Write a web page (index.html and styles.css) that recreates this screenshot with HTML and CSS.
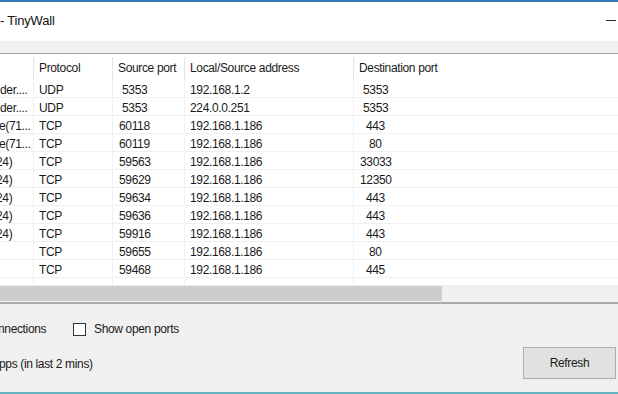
FILE: index.html
```html
<!DOCTYPE html>
<html>
<head>
<meta charset="utf-8">
<title>Connections - TinyWall</title>
<link rel="stylesheet" href="styles.css">
</head>
<body>
<div class="win">
  <div class="topline"></div>
  <div class="titlebar">
    <span class="title">- TinyWall</span>
    <span class="min"></span>
  </div>
  <div class="strip"></div>
  <div class="list">
    <div class="hdr">
      <div class="hc"></div>
      <div class="hc">Protocol</div>
      <div class="hc">Source port</div>
      <div class="hc">Local/Source address</div>
      <div class="hc last">Destination port</div>
    </div>
    <div class="row"><div class="c c1">der....</div><div class="c">UDP</div><div class="c port"> 5353</div><div class="c">192.168.1.2</div><div class="c port last"> 5353</div></div>
    <div class="row"><div class="c c1">der....</div><div class="c">UDP</div><div class="c port"> 5353</div><div class="c">224.0.0.251</div><div class="c port last"> 5353</div></div>
    <div class="row"><div class="c c1 cut1">e(71...</div><div class="c">TCP</div><div class="c port">60118</div><div class="c">192.168.1.186</div><div class="c port last">  443</div></div>
    <div class="row"><div class="c c1 cut1">e(71...</div><div class="c">TCP</div><div class="c port">60119</div><div class="c">192.168.1.186</div><div class="c port last">   80</div></div>
    <div class="row"><div class="c c1 cut4">24)</div><div class="c">TCP</div><div class="c port">59563</div><div class="c">192.168.1.186</div><div class="c port last">33033</div></div>
    <div class="row"><div class="c c1 cut4">24)</div><div class="c">TCP</div><div class="c port">59629</div><div class="c">192.168.1.186</div><div class="c port last">12350</div></div>
    <div class="row"><div class="c c1 cut4">24)</div><div class="c">TCP</div><div class="c port">59634</div><div class="c">192.168.1.186</div><div class="c port last">  443</div></div>
    <div class="row"><div class="c c1 cut4">24)</div><div class="c">TCP</div><div class="c port">59636</div><div class="c">192.168.1.186</div><div class="c port last">  443</div></div>
    <div class="row"><div class="c c1 cut4">24)</div><div class="c">TCP</div><div class="c port">59916</div><div class="c">192.168.1.186</div><div class="c port last">  443</div></div>
    <div class="row"><div class="c c1"></div><div class="c">TCP</div><div class="c port">59655</div><div class="c">192.168.1.186</div><div class="c port last">   80</div></div>
    <div class="row"><div class="c c1"></div><div class="c">TCP</div><div class="c port">59468</div><div class="c">192.168.1.186</div><div class="c port last">  445</div></div>
    <div class="row filler"><div class="c"></div><div class="c"></div><div class="c"></div><div class="c"></div><div class="c last"></div></div>
    <div class="hscroll"><div class="thumb"></div></div>
  </div>
  <div class="panel">
    <div class="opts">
      <div class="optrow">
        <span class="frag">nnections</span>
        <span class="check"></span>
        <span class="label">Show open ports</span>
      </div>
      <div class="optrow">
        <span class="frag2">pps (in last 2 mins)</span>
      </div>
    </div>
    <button class="btn">Refresh</button>
  </div>
  <div class="teal"></div>
</div>
</body>
</html>
```

FILE: styles.css
```css
html, body {
  margin: 0;
  padding: 0;
}
body {
  width: 618px;
  height: 394px;
  overflow: hidden;
  background: #f0f0f0;
  font-family: "Liberation Sans", Arial, sans-serif;
  font-size: 12px;
  letter-spacing: -0.35px;
  color: #1a1a1a;
}
.win {
  display: flex;
  flex-direction: column;
  width: 618px;
  height: 394px;
}
.topline {
  height: 2px;
  background: #3577b8;
  flex: none;
}
.titlebar {
  height: 39px;
  flex: none;
  background: #ffffff;
  display: flex;
  justify-content: space-between;
  align-items: flex-start;
}
.title {
  font-size: 13px;
  letter-spacing: -0.2px;
  line-height: 37px;
  color: #111;
}
.min {
  width: 10px;
  height: 1px;
  background: #2a2a2a;
  margin-top: 18px;
  margin-right: 2px;
}
.strip {
  height: 12px;
  flex: none;
  background: #f0f0f0;
}
.list {
  flex: none;
  background: #ffffff;
  border-top: 1px solid #a3a3a3;
  border-bottom: 2px solid #ababab;
}
.hdr, .row {
  display: grid;
  grid-template-columns: 34px 79px 72px 169px 1fr;
}
.hdr {
  height: 26px;
  align-items: end;
}
.hc {
  height: 23px;
  line-height: 23px;
  padding-left: 5px;
  border-right: 1px solid #e5e5e5;
  white-space: nowrap;
  overflow: hidden;
}
.hc.last, .c.last {
  border-right: none;
}
.row {
  height: 18px;
  grid-template-rows: 17px;
  box-sizing: border-box;
  border-bottom: 1px solid #f0f0f0;
}
.c {
  line-height: 17px;
  padding-top: 2px;
  padding-left: 5px;
  border-right: 1px solid #f0f0f0;
  white-space: pre;
  overflow: hidden;
}
.c1 {
  padding-left: 0;
}
.cut1 {
  text-indent: -1px;
}
.cut4 {
  text-indent: -4px;
}
.port {
  padding-left: 6px;
}
.filler {
  height: 7px;
  grid-template-rows: 7px;
  border-bottom: none;
}
.hscroll {
  height: 17px;
  background: #f0f0f0;
  display: flex;
  align-items: center;
}
.thumb {
  width: 442px;
  height: 15px;
  background: #cdcdcd;
}
.panel {
  flex: 1;
  display: flex;
  justify-content: space-between;
  align-items: flex-end;
  background: #f0f0f0;
}
.opts {
  align-self: flex-start;
  display: flex;
  flex-direction: column;
  padding-top: 17px;
  gap: 19px;
}
.optrow {
  display: flex;
  align-items: center;
  height: 16px;
}
.frag {
  width: 75px;
  margin-left: -2px;
  white-space: nowrap;
}
.check {
  width: 11px;
  height: 11px;
  border: 1px solid #333333;
  background: #ffffff;
  margin-right: 8px;
}
.frag2 {
  margin-left: -1px;
  white-space: nowrap;
}
.btn {
  width: 93px;
  height: 32px;
  margin: 0 2px 13px 0;
  padding: 0;
  border: 1px solid #adadad;
  background: #e1e1e1;
  font-family: inherit;
  font-size: 12px;
  letter-spacing: -0.35px;
  color: #1a1a1a;
}
.teal {
  height: 2px;
  flex: none;
  background: #62b3bf;
}
```
